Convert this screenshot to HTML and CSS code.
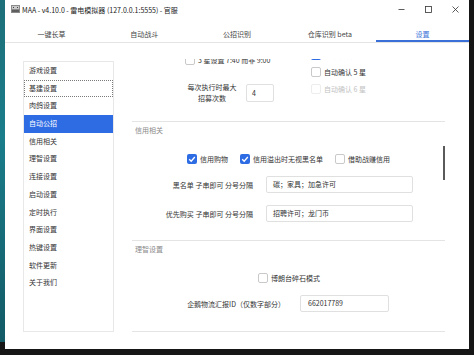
FILE: index.html
```html
<!DOCTYPE html>
<html lang="zh-CN">
<head>
    <meta charset="UTF-8">
    <title>MAA 设置</title>
    <link rel="stylesheet" href="styles.css">
</head>
<body>

    <div class="desktop"></div>

    <div class="window">
        <div class="titlebar">
            <svg class="app-icon" width="9" height="8" viewBox="0 0 9 8">
                <rect x="0" y="0" width="9" height="8" fill="#8a8a8a"/>
                <rect x="1" y="1" width="7" height="3" fill="#c9c9c9"/>
                <rect x="2" y="2" width="1" height="1" fill="#444"/>
                <rect x="6" y="2" width="1" height="1" fill="#444"/>
                <rect x="1" y="5" width="7" height="2" fill="#5e5e5e"/>
            </svg>
            <span class="title">MAA - v4.10.0 - 雷电模拟器 (127.0.0.1:5555) - 官服</span>
            <div class="controls">
                <span class="ctl">
                    <svg width="7" height="7" viewBox="0 0 7 7"><line x1="0.5" y1="3.5" x2="6.5" y2="3.5" stroke="#333" stroke-width="0.8"/></svg>
                </span>
                <span class="ctl">
                    <svg width="7" height="7" viewBox="0 0 7 7"><rect x="0.5" y="0.5" width="6" height="6" fill="none" stroke="#333" stroke-width="0.8"/></svg>
                </span>
                <span class="ctl">
                    <svg width="7" height="7" viewBox="0 0 7 7"><path d="M0.5 0.5 L6.5 6.5 M6.5 0.5 L0.5 6.5" stroke="#333" stroke-width="0.8"/></svg>
                </span>
            </div>
        </div>

        <div class="tabs">
            <span class="tab">一键长草</span>
            <span class="tab">自动战斗</span>
            <span class="tab">公招识别</span>
            <span class="tab">仓库识别 beta</span>
            <span class="tab active">设置</span>
        </div>

        <div class="main">
            <ul class="side-nav">
                <li>游戏设置</li>
                <li class="focused">基建设置</li>
                <li>肉鸽设置</li>
                <li class="selected">自动公招</li>
                <li>信用相关</li>
                <li>理智设置</li>
                <li>连接设置</li>
                <li>启动设置</li>
                <li>定时执行</li>
                <li>界面设置</li>
                <li>热键设置</li>
                <li>软件更新</li>
                <li>关于我们</li>
            </ul>

            <div class="content">
                <div class="scroll">

                    <!-- 自动公招 (滚动后只露出下半部分) -->
                    <section class="group recruit">
                        <div class="col-left">
                            <div class="check-row row-a">
                                <span class="box"></span>
                                <span>3 星设置 7:40 而非 9:00</span>
                            </div>
                            <div class="max-times">
                                <span class="two-line">每次执行时最大<br>招募次数</span>
                                <span class="input tiny">4</span>
                            </div>
                        </div>
                        <div class="col-right">
                            <div class="check-row">
                                <span class="box checked"><svg width="10" height="10" viewBox="0 0 10 10"><polyline points="2.2,5.2 4.2,7.2 7.8,3" fill="none" stroke="#fff" stroke-width="1.3"/></svg></span>
                                <span>自动确认 4 星</span>
                            </div>
                            <div class="check-row">
                                <span class="box"></span>
                                <span>自动确认 5 星</span>
                            </div>
                            <div class="check-row disabled">
                                <span class="box"></span>
                                <span>自动确认 6 星</span>
                            </div>
                        </div>
                    </section>

                    <!-- 信用相关 -->
                    <section class="group credit">
                        <div class="group-title">信用相关</div>
                        <div class="check-line">
                            <div class="check-row">
                                <span class="box checked"><svg width="10" height="10" viewBox="0 0 10 10"><polyline points="2.2,5.2 4.2,7.2 7.8,3" fill="none" stroke="#fff" stroke-width="1.3"/></svg></span>
                                <span>信用购物</span>
                            </div>
                            <div class="check-row">
                                <span class="box checked"><svg width="10" height="10" viewBox="0 0 10 10"><polyline points="2.2,5.2 4.2,7.2 7.8,3" fill="none" stroke="#fff" stroke-width="1.3"/></svg></span>
                                <span>信用溢出时无视黑名单</span>
                            </div>
                            <div class="check-row">
                                <span class="box"></span>
                                <span>借助战赚信用</span>
                            </div>
                        </div>
                        <div class="field first">
                            <span class="field-label">黑名单 子串即可 分号分隔</span>
                            <span class="input wide">碳；家具；加急许可</span>
                        </div>
                        <div class="field second">
                            <span class="field-label">优先购买 子串即可 分号分隔</span>
                            <span class="input wide">招聘许可；龙门币</span>
                        </div>
                    </section>

                    <!-- 理智设置 -->
                    <section class="group sanity">
                        <div class="group-title">理智设置</div>
                        <div class="check-line">
                            <div class="check-row">
                                <span class="box"></span>
                                <span>博朗台碎石模式</span>
                            </div>
                        </div>
                        <div class="field first">
                            <span class="field-label">企鹅物流汇报ID（仅数字部分）</span>
                            <span class="input mid">662017789</span>
                        </div>
                    </section>

                </div>
                <div class="scroll-thumb"></div>
            </div>
        </div>
    </div>

</body>
</html>
```

FILE: styles.css
```css
/* 颜色 */
:root {
    --blue: #2e6ce4;
    --text: #333333;
    --muted: #8a8a8a;
    --line: #e4e4e4;
    --input-line: #e0e0e0;
}

body {
    margin: 0;
    width: 474px;
    height: 355px;
    overflow: hidden;
    display: flex;
    align-items: flex-start;
    background-color: #161616;
    font-family: "Noto Sans CJK SC", "Noto Sans", sans-serif;
    font-size: 7px;
    line-height: 10px;
    color: var(--text);
}

.desktop {
    width: 5px;
    height: 342px;
    flex-shrink: 0;
    background: linear-gradient(180deg, #1d6f79 0%, #1a7d8a 40%, #176b78 70%, #125a66 100%);
}

.window {
    width: 464px;
    height: 349px;
    flex-shrink: 0;
    background-color: #ffffff;
    display: flex;
    flex-direction: column;
}

/* 标题栏 */
.titlebar {
    height: 19px;
    display: flex;
    align-items: center;
}

.app-icon {
    margin-left: 6px;
    margin-top: -1px;
}

.title {
    margin-left: 2px;
    color: #222;
}

.controls {
    margin-left: auto;
    display: flex;
}

.ctl {
    width: 27px;
    height: 19px;
    display: flex;
    align-items: center;
    justify-content: center;
}

/* 顶部标签 */
.tabs {
    height: 23px;
    display: flex;
    border-bottom: 1px solid var(--line);
}

.tab {
    flex: 1;
    text-align: center;
    padding-top: 10px;
    box-sizing: border-box;
    color: #444;
}

.tab.active {
    color: #3a72d8;
    border-bottom: 2px solid #3a6fd8;
}

/* 主体 */
.main {
    flex: 1;
    display: flex;
    align-items: flex-start;
}

.side-nav {
    list-style: none;
    margin: 18px 0 0 18px;
    padding: 0;
    width: 91px;
    height: 271px;
    box-sizing: border-box;
    border: 1px solid #e8e8e8;
}

.side-nav li {
    height: 17.7px;
    line-height: 17.7px;
    padding-left: 5px;
}

.side-nav li.focused {
    outline: 1px dotted #7a7a7a;
    outline-offset: -1px;
}

.side-nav li.selected {
    background-color: var(--blue);
    color: #ffffff;
}

.content {
    position: relative;
    margin: 16px 0 0 11px;
    width: 330px;
    height: 281px;
    overflow: hidden;
}

.scroll {
    margin-top: -11px;
}

.scroll-thumb {
    position: absolute;
    left: 318px;
    top: 87px;
    width: 2px;
    height: 34px;
    background-color: #5a5a5a;
}

.group {
    margin: 0 10px 0 7px;
    border-bottom: 1px solid var(--line);
}

.group-title {
    margin-top: 3px;
    padding-left: 3px;
    color: var(--muted);
}

/* 复选框 */
.check-row {
    height: 14px;
    display: flex;
    align-items: center;
    gap: 3px;
    white-space: nowrap;
}

.box {
    width: 10px;
    height: 10px;
    box-sizing: border-box;
    border: 1px solid #c9c9c9;
    border-radius: 2px;
    background-color: #fff;
    flex-shrink: 0;
    display: flex;
}

.box.checked {
    border: none;
    background-color: var(--blue);
}

.check-row.disabled {
    color: #c2c2c2;
}

.check-row.disabled .box {
    border-color: #ededed;
}

/* 输入框 */
.input {
    height: 17px;
    line-height: 15px;
    box-sizing: border-box;
    border: 1px solid var(--input-line);
    border-radius: 2px;
    padding: 0 6px;
    white-space: nowrap;
}

.input.tiny {
    width: 28px;
    height: 18px;
    line-height: 16px;
    padding-left: 5px;
}

.input.wide {
    width: 147px;
}

.input.mid {
    width: 89px;
    padding-left: 7px;
}

/* 自动公招 */
.recruit {
    height: 74px;
    box-sizing: border-box;
    display: flex;
}

.col-left {
    width: 179px;
}

.row-a {
    margin-top: 5px;
    padding-left: 53px;
}

.max-times {
    margin-top: 15px;
    padding-left: 52px;
    display: flex;
    align-items: center;
    gap: 6px;
}

.two-line {
    width: 56px;
    text-align: center;
    line-height: 11px;
}

.col-right {
    display: flex;
    flex-direction: column;
    gap: 3px;
}

/* 信用相关 / 理智设置 */
.check-line {
    margin-top: 17px;
    display: flex;
    gap: 12px;
}

.credit .check-line {
    padding-left: 55px;
}

.sanity .check-line {
    padding-left: 126px;
}

.field {
    display: flex;
    align-items: center;
}

.field.first {
    margin-top: 10px;
}

.field.second {
    margin-top: 12px;
}

.field-label {
    text-align: right;
    white-space: nowrap;
}

.credit {
    padding-bottom: 18px;
}

.credit .field-label {
    width: 121px;
    margin-right: 13px;
}

.sanity {
    padding-bottom: 19px;
}

.sanity .field-label {
    width: 153px;
    margin-right: 15px;
}
```
